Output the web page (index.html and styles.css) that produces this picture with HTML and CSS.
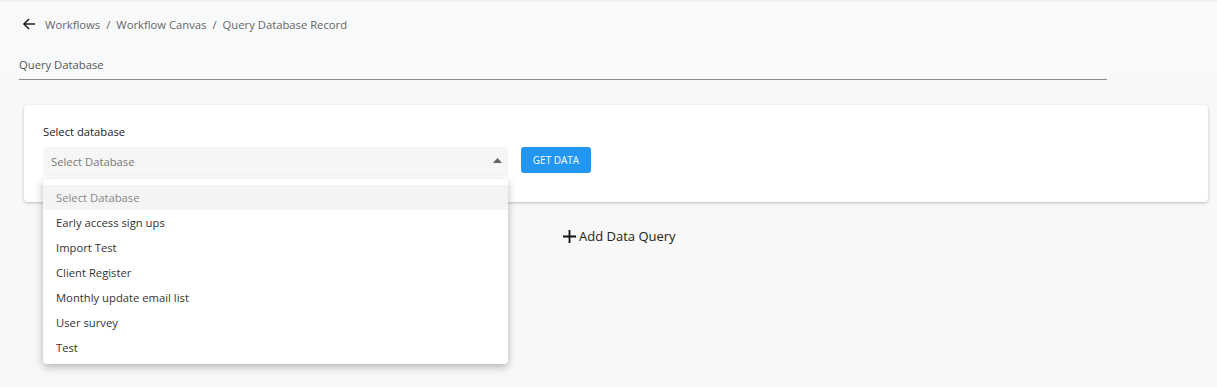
FILE: index.html
```html
<!DOCTYPE html>
<html>
<head>
<meta charset="utf-8">
<link rel="stylesheet" href="styles.css">
</head>
<body>
<div class="page">
  <header class="header">
    <nav class="crumbs">
      <svg class="back" width="14" height="14" viewBox="0 0 14 14"><path d="M13 7H2M7 2L2 7l5 5" fill="none" stroke="#222" stroke-width="1.6"/></svg>
      <span>Workflows</span><span class="sep">/</span><span>Workflow Canvas</span><span class="sep">/</span><span>Query Database Record</span>
    </nav>
    <div class="title-field">Query Database</div>
  </header>
  <main class="main">
    <section class="card">
      <label class="label">Select database</label>
      <div class="row">
        <div class="select-wrap">
          <div class="select">
            <span>Select Database</span>
            <svg class="caret" width="9" height="5" viewBox="0 0 9 5"><path d="M0 5L4.5 0 9 5z" fill="#666"/></svg>
          </div>
          <ul class="menu">
            <li class="muted">Select Database</li>
            <li>Early access sign ups</li>
            <li>Import Test</li>
            <li>Client Register</li>
            <li>Monthly update email list</li>
            <li>User survey</li>
            <li>Test</li>
          </ul>
        </div>
        <button class="btn">GET DATA</button>
      </div>
    </section>
    <div class="add">
      <svg width="13" height="13" viewBox="0 0 13 13"><path d="M6.5 0v13M0 6.5h13" stroke="#111" stroke-width="1.8"/></svg>
      <span>Add Data Query</span>
    </div>
  </main>
</div>
</body>
</html>
```

FILE: styles.css
```css
* { box-sizing: border-box; }
html, body { margin: 0; padding: 0; }
body {
  background: #f8f8f8;
  font-family: "Open Sans", "Liberation Sans", sans-serif;
  font-size: 11.25px;
  color: #222;
  width: 1217px;
  height: 387px;
  overflow: hidden;
}
.page { padding-top: 2px; box-shadow: inset 0 2px 2px -1px #ececec; }
.header {
  background: #f8f9fa;
  padding: 12px 0 0 19px;
  height: 77px;
}
.crumbs {
  display: flex;
  align-items: center;
  height: 20px;
  color: #666;
  font-size: 11.25px;
}
.crumbs .back { margin: 0 9px 0 3px; }
.crumbs .sep { margin: 0 6px; }
.title-field {
  margin-top: 22px;
  width: 1088px;
  height: 24px;
  border-bottom: 1px solid #8a8a8a;
  color: #555;
  font-size: 11.25px;
  line-height: 17px;
}
.main { padding: 26px 9px 0 24px; }
.card {
  background: #fff;
  border-radius: 4px;
  box-shadow: 0 1px 3px rgba(0,0,0,0.25);
  height: 97px;
  padding: 19px 19px 0 19px;
}
.label { display: block; font-size: 11.25px; color: #222; line-height: 16px; }
.row { display: flex; align-items: flex-start; gap: 13px; margin-top: 7px; }
.select-wrap { position: relative; width: 465px; }
.select {
  height: 29px;
  background: #f6f6f6;
  border-radius: 4px;
  display: flex;
  align-items: center;
  justify-content: space-between;
  padding: 0 6px 0 8px;
  color: #777;
}
.caret { margin-bottom: 2px; }
.menu {
  position: absolute;
  left: 0;
  top: 32px;
  width: 465px;
  margin: 0;
  padding: 6px 0 4px;
  list-style: none;
  background: #fff;
  border-radius: 4px;
  box-shadow: 0 3px 8px rgba(0,0,0,0.28);
  z-index: 2;
}
.menu li {
  height: 25px;
  line-height: 25px;
  padding-left: 13px;
  color: #333;
}
.menu li.muted { background: #f4f4f4; color: #888; }
.btn {
  height: 26px;
  width: 70px;
  background: #2196f3;
  color: #fff;
  border: none;
  border-radius: 3px;
  font-family: "Open Sans", "Liberation Sans", sans-serif;
  font-size: 10px;
  padding: 0;
}
.add {
  display: flex;
  align-items: center;
  gap: 3px;
  margin: 25px 0 0 539px;
  font-size: 13px;
  color: #222;
}
```
